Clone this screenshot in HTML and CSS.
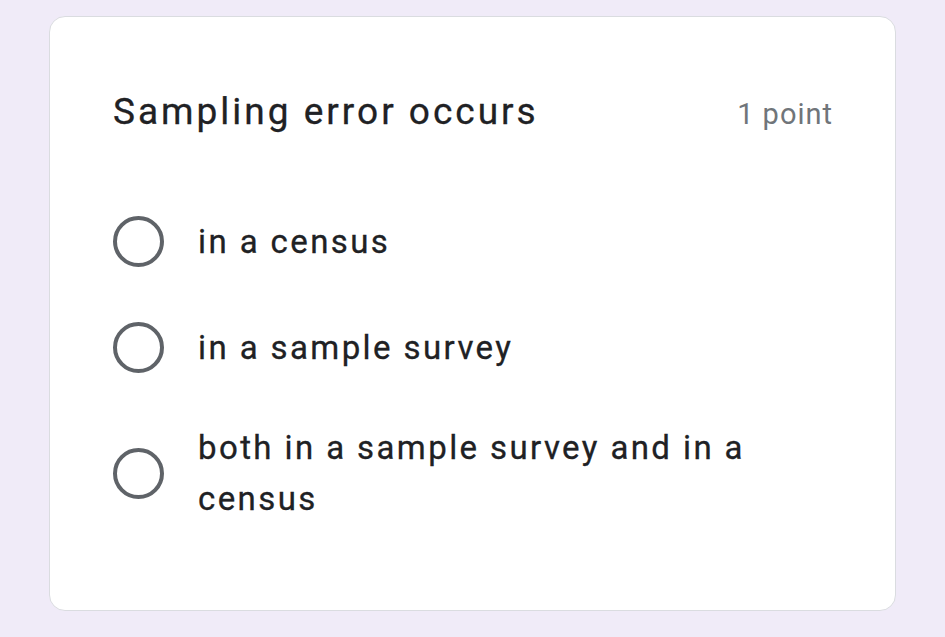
FILE: index.html
```html
<!DOCTYPE html>
<html>
<head>
<meta charset="utf-8">
<link rel="stylesheet" href="styles.css">
</head>
<body>
<div class="card">
  <div class="header">
    <div class="title">Sampling error occurs</div>
    <div class="points">1 point</div>
  </div>
  <div class="options">
    <div class="option"><span class="radio"></span><span class="label">in a census</span></div>
    <div class="option"><span class="radio"></span><span class="label">in a sample survey</span></div>
    <div class="option option-multi"><span class="radio"></span><span class="label">both in a sample survey and in a census</span></div>
  </div>
</div>
</body>
</html>
```
FILE: styles.css
```css
html, body {
  margin: 0;
  padding: 0;
  background: #f0ebf8;
}
body {
  padding: 16px 0 0 49px;
  font-family: Roboto, "Liberation Sans", sans-serif;
}
.card {
  box-sizing: border-box;
  width: 847px;
  height: 595px;
  background: #fff;
  border: 1px solid #dadce0;
  border-radius: 16px;
  padding: 71px 63px 0 63px;
}
.header {
  display: flex;
  justify-content: space-between;
  align-items: baseline;
}
.title {
  font-size: 37px;
  line-height: 48px;
  color: #202124;
  letter-spacing: 3px;
  -webkit-text-stroke: 0.3px #202124;
}
.points {
  font-size: 29px;
  color: #70757a;
  letter-spacing: 1px;
  margin-right: -1px;
}
.options {
  margin-top: 80px;
  display: flex;
  flex-direction: column;
  gap: 55px;
}
.option {
  display: flex;
  align-items: center;
}
.option-multi {
  margin-top: -6px;
}
.radio {
  box-sizing: border-box;
  flex: none;
  width: 51px;
  height: 51px;
  border: 4px solid #5f6368;
  border-radius: 50%;
  margin-right: 34px;
}
.label {
  font-size: 33px;
  line-height: 51px;
  color: #202124;
  letter-spacing: 2.4px;
  -webkit-text-stroke: 0.3px #202124;
  max-width: 600px;
}
```
